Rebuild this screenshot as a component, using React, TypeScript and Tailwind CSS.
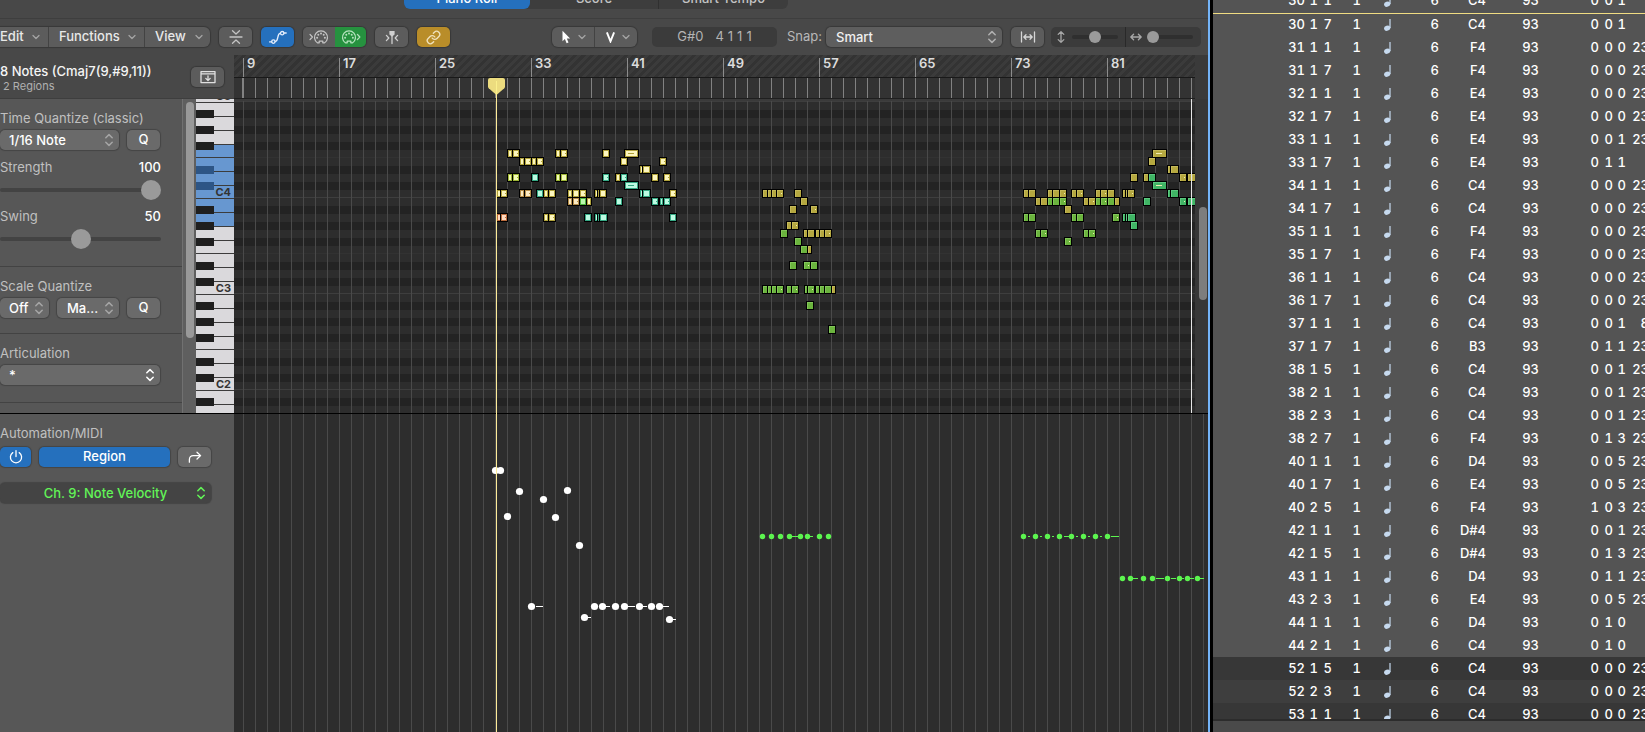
import { useState } from "react";
import type { ReactNode } from "react";
import { ChevronDown, Link } from "lucide-react";

type Tone = "y" | "g" | "t" | "n" | "o" | "l" | "O" | "G" | "T";

const TONES: Record<Tone, [string, string]> = {
  y: ["#fdf7c0", "#b0a23c"],
  l: ["#f4fbb8", "#9db436"],
  n: ["#fcebc4", "#b58d48"],
  o: ["#fdd9c0", "#bb6b3c"],
  g: ["#bdf9ae", "#4fb53c"],
  t: ["#bdfbe2", "#36a884"],
  O: ["#b5a840", "#c5b95a"],
  G: ["#6bb43e", "#82c659"],
  T: ["#40b565", "#5cc880"],
};

/* Each row: semitones from C4, then notes as [x, width, tone]. */
const NOTES: [number, [number, number, Tone][]][] = [
  [5, [[273, 6, "y"], [278, 8, "y"], [321, 6, "y"], [326, 8, "y"], [368, 8, "y"], [390, 15, "y"], [918, 15, "O"]]],
  [4, [[285, 6, "y"], [290, 8, "y"], [297, 6, "y"], [302, 8, "y"], [386, 8, "y"], [425, 8, "y"], [914, 8, "O"]]],
  [3, [[405, 4, "y"], [408, 9, "y"], [933, 4, "O"], [936, 9, "O"]]],
  [2, [[273, 6, "l"], [278, 8, "l"], [297, 8, "t"], [321, 6, "l"], [326, 8, "l"], [368, 8, "t"], [381, 6, "y"], [386, 8, "t"], [417, 8, "y"], [429, 8, "y"], [896, 8, "O"], [909, 6, "O"], [914, 8, "T"], [945, 8, "O"], [953, 5, "O"], [957, 6, "O"]]],
  [1, [[390, 15, "t"], [918, 15, "T"]]],
  [0, [[262, 6, "y"], [266, 8, "y"], [285, 6, "n"], [290, 8, "n"], [302, 8, "t"], [309, 6, "y"], [314, 8, "y"], [333, 6, "y"], [338, 8, "y"], [345, 8, "y"], [360, 4, "y"], [363, 3, "y"], [365, 8, "y"], [405, 4, "t"], [408, 9, "t"], [435, 8, "y"], [528, 6, "O"], [533, 5, "O"], [537, 6, "O"], [542, 8, "O"], [560, 8, "O"], [789, 6, "O"], [794, 8, "O"], [813, 6, "O"], [818, 8, "O"], [825, 8, "O"], [837, 6, "O"], [842, 8, "O"], [861, 6, "O"], [866, 8, "O"], [873, 8, "O"], [888, 4, "O"], [891, 3, "O"], [893, 8, "O"], [933, 4, "T"], [936, 9, "T"]]],
  [-1, [[333, 6, "n"], [338, 8, "n"], [345, 8, "g"], [352, 6, "y"], [381, 8, "t"], [417, 8, "t"], [425, 5, "t"], [429, 8, "t"], [566, 8, "O"], [801, 6, "O"], [806, 8, "O"], [813, 6, "G"], [818, 8, "G"], [825, 8, "G"], [849, 6, "O"], [854, 8, "O"], [861, 6, "G"], [866, 8, "G"], [873, 8, "G"], [880, 6, "O"], [909, 8, "T"], [945, 8, "T"], [953, 5, "T"], [957, 6, "T"]]],
  [-2, [[555, 8, "O"], [576, 8, "O"], [830, 8, "O"]]],
  [-3, [[262, 6, "o"], [266, 8, "o"], [309, 6, "y"], [314, 8, "y"], [350, 8, "t"], [360, 4, "t"], [363, 3, "t"], [365, 9, "t"], [435, 8, "t"], [789, 6, "G"], [794, 8, "G"], [837, 6, "G"], [842, 8, "G"], [878, 8, "G"], [888, 4, "T"], [891, 3, "T"], [893, 9, "T"]]],
  [-4, [[552, 6, "O"], [557, 8, "O"], [896, 8, "T"]]],
  [-5, [[546, 8, "G"], [569, 5, "O"], [573, 8, "O"], [581, 5, "O"], [585, 6, "O"], [590, 8, "O"], [801, 6, "G"], [806, 8, "G"], [849, 6, "G"], [854, 8, "G"]]],
  [-6, [[560, 8, "G"], [830, 8, "G"]]],
  [-7, [[566, 8, "G"], [573, 5, "O"]]],
  [-9, [[555, 8, "G"], [569, 8, "G"], [576, 8, "G"]]],
  [-12, [[528, 6, "G"], [533, 5, "G"], [537, 6, "G"], [542, 8, "G"], [552, 6, "G"], [557, 8, "G"], [570, 4, "G"], [573, 8, "G"], [581, 5, "G"], [585, 6, "G"], [590, 8, "G"], [597, 5, "O"]]],
  [-14, [[572, 8, "G"]]],
  [-17, [[594, 8, "G"]]],
];

/* Velocity points: [x, y] of the dot, with an optional tail [from, to]. */
const SELECTED_VELOCITIES: [number, number, number?, number?][] = [
  [261, 56], [266, 56], [273, 102], [285, 77], [309, 85], [321, 103], [333, 76], [345, 131],
  [297, 192, 302, 309], [350, 203, 354, 357], [360, 192], [368, 192, 372, 376], [381, 192],
  [390, 192, 394, 401], [405, 192, 409, 413], [417, 192], [425, 192, 429, 435], [435, 205, 439, 442],
];
const VELOCITIES: [number, number, number?, number?][] = [
  [528, 122], [537, 122], [546, 122], [555, 122, 558, 564], [566, 122], [573, 122, 576, 579], [585, 122], [594, 122],
  [789, 122, 794, 796], [801, 122, 806, 808], [813, 122, 818, 820], [825, 122, 830, 835], [837, 122, 842, 844],
  [849, 122, 854, 856], [861, 122, 866, 868], [873, 122, 877, 885],
  [888, 164], [896, 164, 899, 904], [909, 164], [918, 164, 922, 930], [933, 164, 937, 942], [945, 164, 948, 950], [953, 164, 956, 960], [963, 164, 966, 970],
];

const EVENTS = `30 1 1 C4 0 0 1
30 1 7 C4 0 0 1
31 1 1 F4 0 0 0 23
31 1 7 F4 0 0 0 23
32 1 1 E4 0 0 0 23
32 1 7 E4 0 0 0 23
33 1 1 E4 0 0 1 23
33 1 7 E4 0 1 1
34 1 1 C4 0 0 0 23
34 1 7 C4 0 0 0 23
35 1 1 F4 0 0 0 23
35 1 7 F4 0 0 0 23
36 1 1 C4 0 0 0 23
36 1 7 C4 0 0 0 23
37 1 1 C4 0 0 1 8
37 1 7 B3 0 1 1 23
38 1 5 C4 0 0 1 23
38 2 1 C4 0 0 1 23
38 2 3 C4 0 0 1 23
38 2 7 F4 0 1 3 23
40 1 1 D4 0 0 5 23
40 1 7 E4 0 0 5 23
40 2 5 F4 1 0 3 23
42 1 1 D#4 0 0 1 23
42 1 5 D#4 0 1 3 23
43 1 1 D4 0 1 1 23
43 2 3 E4 0 0 5 23
44 1 1 D4 0 1 0
44 2 1 C4 0 1 0
52 1 5 C4 0 0 0 23
52 2 3 C4 0 0 0 23
53 1 1 C4 0 0 0 23`.split("\n").map((line) => line.split(" "));

const BTN = "flex h-5 shrink-0 items-center justify-center rounded-[5px] shadow-[0_0_1px_1px_rgba(0,0,0,0.22)]";

function Stepper({ className }: { className: string }) {
  return (
    <svg viewBox="0 0 10 14" className={`pointer-events-none absolute h-[14px] w-[10px] ${className}`} fill="none" stroke="currentColor" strokeWidth="1.5" strokeLinecap="round" strokeLinejoin="round" aria-hidden="true">
      <path d="M1.8 4.8 5 1.6l3.2 3.2M1.8 9.2 5 12.4l3.2-3.2" />
    </svg>
  );
}

function Picker({ label, value, className, box, arrow }: { label: string; value: string; className: string; box: string; arrow: string }) {
  return (
    <div className={`relative flex h-5 items-center ${className}`}>
      <select aria-label={label} defaultValue={value} className={`h-full w-full appearance-none rounded-[5px] font-medium leading-5 shadow-[0_0_1px_1px_rgba(0,0,0,0.22)] outline-none ${box}`}>
        <option>{value}</option>
      </select>
      <Stepper className={arrow} />
    </div>
  );
}

function Slider({ label, initial, className }: { label: string; initial: number; className: string }) {
  const [value, setValue] = useState(initial);
  return (
    <input
      type="range"
      aria-label={label}
      min={0}
      max={100}
      value={value}
      onChange={(e) => setValue(Number(e.target.value))}
      className={`block appearance-none bg-transparent outline-none [&::-webkit-slider-runnable-track]:h-1 [&::-webkit-slider-runnable-track]:rounded-full [&::-webkit-slider-thumb]:appearance-none [&::-webkit-slider-thumb]:rounded-full [&::-webkit-slider-thumb]:bg-[#9a9a9a] ${className}`}
    />
  );
}

const PANEL_SLIDER = "h-5 w-full [&::-webkit-slider-runnable-track]:bg-[#434343] [&::-webkit-slider-thumb]:-mt-2 [&::-webkit-slider-thumb]:size-5";
const ZOOM_SLIDER = "h-3 w-[46px] [&::-webkit-slider-runnable-track]:bg-[#2f2f2f] [&::-webkit-slider-thumb]:-mt-1 [&::-webkit-slider-thumb]:size-3";

function Glyph({ children, w = 20, h = 16 }: { children: ReactNode; w?: number; h?: number }) {
  return (
    <svg width={w} height={h} viewBox={`0 0 ${w} ${h}`} fill="none" stroke="currentColor" strokeWidth="1.3" strokeLinecap="round" strokeLinejoin="round" aria-hidden="true">
      {children}
    </svg>
  );
}

function DinPlug({ x }: { x: number }) {
  return (
    <g transform={`translate(${x} 0)`}>
      <path d="M-3.6 13.8A6.5 6.5 0 1 1 3.6 13.8H1.8V12.2H-1.8V13.8Z" />
      <g fill="currentColor" stroke="none">
        <circle cx="-3.9" cy="8.8" r="1" />
        <circle cx="-2.7" cy="5.8" r="1" />
        <circle cx="0" cy="4.5" r="1" />
        <circle cx="2.7" cy="5.8" r="1" />
        <circle cx="3.9" cy="8.8" r="1" />
      </g>
    </g>
  );
}

function MenuButton({ children, className }: { children: ReactNode; className: string }) {
  return (
    <button type="button" className={`flex h-5 items-center justify-between ${className}`}>
      {children}
      <ChevronDown className="size-3 text-[#a5a5a5]" strokeWidth={2.5} />
    </button>
  );
}

function Toolbar() {
  return (
    <div className="flex h-9 shrink-0 items-center text-[#e8e8e8]">
      <div className="flex rounded-r-[6px] bg-[#5c5c5c] text-[13px] font-medium shadow-[0_0_1px_1px_rgba(0,0,0,0.22)]">
        <MenuButton className="w-12 pr-[6px]">Edit</MenuButton>
        <MenuButton className="w-24 border-l border-[#434343] pl-[10px] pr-[6px]">Functions</MenuButton>
        <MenuButton className="w-[66px] border-l border-[#434343] pl-[10px] pr-[5px]">View</MenuButton>
      </div>
      <button type="button" aria-label="Collapse" className={`${BTN} ml-[9px] w-[33px] bg-[#5c5c5c] text-[#c4c4c4]`}>
        <Glyph><path d="M6.5 1.8 10 5l3.5-3.2M6.5 14.2 10 11l3.5 3.2M4 8h12" /></Glyph>
      </button>
      <button type="button" aria-label="Show automation" className={`${BTN} ml-[9px] w-[33px] bg-[#2570bd] text-[#e6eefc]`}>
        <Glyph>
          <circle cx="5.4" cy="12.6" r="1.7" />
          <circle cx="14.2" cy="4.2" r="1.7" />
          <path d="M1.6 12.9h2M7.2 12.600C11 12.200 8.600 4.700 12.400 4.200M16 4H18.200" />
        </Glyph>
      </button>
      <div className="ml-[9px] flex rounded-[5px] shadow-[0_0_1px_1px_rgba(0,0,0,0.22)]">
        <button type="button" aria-label="MIDI in" className="flex h-5 w-8 items-center justify-center rounded-l-[5px] bg-[#5c5c5c] text-[#c4c4c4]">
          <Glyph><path d="M1 5.4 3.4 8 1 10.6" /><DinPlug x={12} /></Glyph>
        </button>
        <button type="button" aria-label="MIDI out" className="flex h-5 w-[31px] items-center justify-center rounded-r-[5px] bg-[#26923f] text-[#b5e3be]">
          <Glyph><path d="M16.4 5.4 18.8 8l-2.4 2.6" /><DinPlug x={8} /></Glyph>
        </button>
      </div>
      <button type="button" aria-label="Catch playhead" className={`${BTN} ml-[9px] w-[33px] bg-[#5c5c5c] text-[#d0d0d0]`}>
        <Glyph>
          <path d="M7.4 2h5.2v3.6L10 7.800 7.400 5.600Z" fill="currentColor" stroke="none" />
          <path d="M10 6v8.5M4.4 6.4 6.8 9l-2.4 2.6M15.6 6.4 13.2 9l2.4 2.6" />
        </Glyph>
      </button>
      <button type="button" aria-label="Link" className={`${BTN} ml-[9px] w-[33px] bg-[#b98d29] text-[#f0e2bd]`}>
        <Link className="size-[15px]" strokeWidth={2.2} />
      </button>

      <div className="ml-auto flex rounded-[6px] bg-[#5c5c5c] text-[13px] font-medium shadow-[0_0_1px_1px_rgba(0,0,0,0.22)]">
        <MenuButton className="w-[42px] pl-2 pr-[6px]">
          <svg width="12" height="14" viewBox="0 0 12 14" fill="#fff" aria-label="Pointer tool"><path d="M2.5.8v10.4l2.4-2.1 1.7 4.2 1.900-.8-1.700-4.100h3.300z" /></svg>
        </MenuButton>
        <MenuButton className="w-[43px] border-l border-[#434343] pl-[11px] pr-[5px]">
          <svg width="9" height="12" viewBox="0 0 9 12" fill="none" stroke="#fff" strokeWidth="1.9" aria-label="Velocity tool"><path d="M.9 1.400 4.500 10.400 8.100 1.400" /></svg>
        </MenuButton>
      </div>
      <output className="ml-[15px] flex h-5 w-[125px] shrink-0 items-center justify-center gap-3 rounded-[5px] bg-[#3b3b3b] text-[13px] text-[#b4b4b4]">
        <span>G#0</span>
        <span className="flex gap-1"><span>4</span><span>1</span><span>1</span><span>1</span></span>
      </output>
      <label className="ml-[10px] text-[13px] text-[#b8b8b8]" htmlFor="snap">Snap:</label>
      <div className="relative ml-[4px] flex h-5 w-[176px] shrink-0 items-center">
        <select id="snap" defaultValue="Smart" className="h-full w-full appearance-none rounded-[5px] bg-[#5e5e5e] pl-[10px] text-[13px] font-medium leading-5 text-[#f0f0f0] shadow-[0_0_1px_1px_rgba(0,0,0,0.22)] outline-none">
          <option>Smart</option>
        </select>
        <Stepper className="right-[5px] text-[#b0b0b0]" />
      </div>
      <button type="button" aria-label="Zoom to fit" className={`${BTN} ml-[9px] w-[33px] bg-[#5c5c5c] text-[#d6d6d6]`}>
        <Glyph><path d="M3.5 3v10M16.5 3v10M6 8h8M8 5.8 5.8 8 8 10.2M12 5.8 14.2 8 12 10.2" /></Glyph>
      </button>
      <div className="ml-[7px] mr-[7px] flex h-5 shrink-0 items-center rounded-[5px] bg-[#3b3b3b] text-[#a8a8a8]">
        <div className="flex h-full w-[75px] items-center gap-1 border-r border-[#292929] pl-[3px]">
          <Glyph w={14}><path d="M7 3v10M4.2 5.4 7 2.6l2.8 2.8M4.2 10.6 7 13.4l2.8-2.8" /></Glyph>
          <Slider label="Vertical zoom" initial={49} className={ZOOM_SLIDER} />
        </div>
        <div className="flex h-full w-[75px] items-center gap-1 pl-[3px]">
          <Glyph w={14}><path d="M3 8h8M4.6 5.2 1.8 8l2.8 2.8M9.4 5.2 12.2 8l-2.8 2.8" /></Glyph>
          <Slider label="Horizontal zoom" initial={0} className={ZOOM_SLIDER} />
        </div>
      </div>
    </div>
  );
}

const LABEL = "h-5 text-[13px] leading-5 text-[#c0c0c0]";

function Inspector() {
  const q = `${BTN} ml-2 w-[33px] bg-[#6a6a6a] text-[13px] font-medium text-white`;
  const box = "bg-[#6a6a6a] text-[13px] text-white";
  return (
    <div className="w-[182px] shrink-0 bg-[#575757]">
      <section className="h-[168px] border-b border-[#434343] pr-[21px] pt-[9px]">
        <h3 className={LABEL}>Time Quantize (classic)</h3>
        <div className="mt-[2px] flex">
          <Picker label="Time Quantize" value="1/16 Note" className="w-[119px]" box={`${box} pl-[9px]`} arrow="right-[5px] text-[#a5a5a5]" />
          <button type="button" className={q}>Q</button>
        </div>
        <div className={`${LABEL} mt-[7px] flex justify-between`}><span>Strength</span><span className="font-medium text-white">100</span></div>
        <Slider label="Strength" initial={100} className={`mt-[3px] ${PANEL_SLIDER}`} />
        <div className={`${LABEL} mt-[6px] flex justify-between`}><span>Swing</span><span className="font-medium text-white">50</span></div>
        <Slider label="Swing" initial={50} className={`mt-[3px] ${PANEL_SLIDER}`} />
      </section>
      <section className="h-[67px] border-b border-[#434343] pr-[21px] pt-[9px]">
        <h3 className={LABEL}>Scale Quantize</h3>
        <div className="mt-[2px] flex">
          <Picker label="Scale Quantize" value="Off" className="w-[49px]" box={`${box} pl-[9px]`} arrow="right-[5px] text-[#a5a5a5]" />
          <Picker label="Scale" value="Ma..." className="ml-2 w-[62px]" box={`${box} pl-[10px]`} arrow="right-[5px] text-[#a5a5a5]" />
          <button type="button" className={q}>Q</button>
        </div>
      </section>
      <section className="h-[69px] border-b border-[#434343] pr-[21px] pt-[9px]">
        <h3 className={LABEL}>Articulation</h3>
        <Picker label="Articulation" value="*" className="mt-[2px] w-[160px]" box={`${box} pl-[9px]`} arrow="right-[5px] text-white" />
      </section>
    </div>
  );
}

/* Bottom edges of the white keys inside one octave, from B down to C. */
const WHITE_EDGES = [14, 28, 42, 55, 69, 83, 96];
const BLACK_TOPS = [8, 24, 40, 64, 80];
const OCTAVES = [-93, 3, 99, 195, 291];

function Keyboard() {
  return (
    <svg width="38" height="314" className="block shrink-0" aria-label="Keyboard">
      <rect width="38" height="314" fill="#dad9dc" />
      <rect y="46" width="38" height="81" fill="#6797d0" />
      {OCTAVES.map((top) => (
        <g key={top}>
          {WHITE_EDGES.map((y) => <rect key={y} y={top + y} width="38" height="1" fill="#3c3c3c" />)}
          {BLACK_TOPS.map((y) => (
            <rect key={y} y={top + y} width="18" height="8" fill={top === 3 && y >= 64 ? "#2d5585" : "#1f1f1f"} />
          ))}
        </g>
      ))}
      <g fill="#333" fontSize="11" fontWeight="700" textAnchor="end">
        <text x="35" y="1">C5</text>
        <text x="35" y="97">C4</text>
        <text x="35" y="193">C3</text>
        <text x="35" y="289">C2</text>
      </g>
    </svg>
  );
}

function Roll() {
  return (
    <svg width="100%" height="314" className="block" aria-label="Piano roll">
      <defs>
        <pattern id="rows" y="3" width="12" height="96" patternUnits="userSpaceOnUse">
          <rect width="12" height="96" fill="#2d2d2d" />
          {BLACK_TOPS.map((y) => <rect key={y} y={y} width="12" height="8" fill="#232323" />)}
          <rect y="95" width="12" height="1" fill="#3e3e3e" />
          <rect y="55" width="12" height="1" fill="#323232" />
        </pattern>
        <pattern id="bars" x="9" width="12" height="96" patternUnits="userSpaceOnUse">
          <rect width="1" height="96" fill="#4a4a4a" />
        </pattern>
      </defs>
      <rect width="100%" height="314" fill="url(#rows)" />
      <rect width="100%" height="314" fill="url(#bars)" />
      <rect width="100%" height="2" fill="#3a3a3a" />
      {NOTES.map(([pitch, notes]) =>
        notes.map(([x, w, tone], i) => {
          const y = 90 - pitch * 8;
          const [fill, edge] = TONES[tone];
          const bright = tone === tone.toLowerCase();
          return (
            <g key={`${pitch}:${i}`}>
              <rect x={x} y={y} width={w} height="9" fill="#000" />
              <rect x={x + 1} y={y + 1} width={Math.max(w - 2, 1)} height="7" fill={edge} />
              {w > 3 && <rect x={x + 2} y={y + 2} width={Math.max(w - (bright ? 4 : 3), 1)} height={bright ? 5 : 6} fill={fill} />}
              {w === 15 && <rect x={x + 4} y={y + 4} width="6" height="1" fill={bright ? edge : "#f2ecb4"} />}
              {w === 8 && i % 2 === 1 && <rect x={x + 5} y={y + 4} width="1" height="1" fill={bright ? edge : "#f2ecb4"} />}
            </g>
          );
        }),
      )}
      <rect x="957" width="1" height="314" fill="#e6e6e6" />
    </svg>
  );
}

function Points({ data, r, color }: { data: [number, number, number?, number?][]; r: number; color: string }) {
  return (
    <g fill={color}>
      {data.map(([x, y, from, to], i) => (
        <g key={i}>
          <circle cx={x + 0.5} cy={y + 0.5} r={r} />
          {from !== undefined && to !== undefined && <rect x={from} y={y} width={to - from} height="1" />}
        </g>
      ))}
    </g>
  );
}

function VelocityLane() {
  return (
    <div className="min-w-0 flex-1 overflow-hidden">
      <svg width="100%" height="100%" className="block" aria-label="Note velocity">
        <rect width="100%" height="100%" fill="#2d2d2d" />
        <rect width="100%" height="100%" fill="url(#bars)" />
        <Points data={SELECTED_VELOCITIES} r={3.6} color="#fff" />
        <Points data={VELOCITIES} r={2.7} color="#5cf44f" />
      </svg>
    </div>
  );
}

function Ruler() {
  return (
    <div className="h-11 min-w-0 flex-1 overflow-hidden border-b border-[#1f1f1f] bg-[#333]">
      <div className="flex h-[23px] border-b border-[#191919] bg-[repeating-linear-gradient(135deg,#333_0px,#333_3px,#3b3b3b_3px,#3b3b3b_6px)] pl-[9px] pt-[3px]">
        {[9, 17, 25, 33, 41, 49, 57, 65, 73, 81].map((bar) => (
          <span key={bar} className="h-full w-24 shrink-0 border-l border-[#8c8c8c] pl-[3px] text-[13px] font-semibold leading-[11px] text-[#dcdcdc]">{bar}</span>
        ))}
      </div>
      <div className="h-5 bg-[repeating-linear-gradient(90deg,#828282_0px,#828282_1px,transparent_1px,transparent_12px)] bg-[position:9px_0] bg-repeat-x" />
    </div>
  );
}

function EventList() {
  return (
    <aside className="flex w-[432px] shrink-0 flex-col overflow-hidden bg-[#4a4a4a]">
      <div className="min-h-0 flex-1 overflow-hidden border-b-2 border-[#2c2c2c] bg-[#545454]">
        <table className="-mt-[10px] w-[436px] table-fixed border-collapse text-[13px] font-medium tabular-nums leading-5 text-white">
          <colgroup>
            <col className="w-[92px]" /><col className="w-[13px]" /><col className="w-[14px]" /><col className="w-[29px]" />
            <col className="w-[30px]" /><col className="w-[48px]" /><col className="w-[47px]" /><col className="w-[53px]" />
            <col className="w-[60px]" /><col className="w-[14px]" /><col className="w-[13px]" /><col className="w-[23px]" />
          </colgroup>
          <tbody>
            {EVENTS.map(([bar, beat, div, pitch, l1, l2, l3, l4], i) => (
              <tr key={i} className={`h-[23px] text-right *:p-0 *:pb-[2px] ${i === 0 ? "border-b border-[#f0dc82]" : ""} ${i >= 29 ? (i % 2 ? "bg-[#373737]" : "bg-[#3e3e3e]") : ""}`}>
                <td>{bar}</td>
                <td>{beat}</td>
                <td>{div}</td>
                <td>1</td>
                <td>
                  <svg width="7" height="14" viewBox="0 0 7 14" className="ml-auto block" fill="#c6d9ee" aria-label="Note">
                    <ellipse cx="3.2" cy="11.2" rx="3.2" ry="2.5" transform="rotate(-20 3.2 11.2)" />
                    <rect x="5.400" y="2" width="1.200" height="9" />
                  </svg>
                </td>
                <td>6</td>
                <td>{pitch}</td>
                <td>93</td>
                <td>{l1}</td>
                <td>{l2}</td>
                <td>{l3}</td>
                <td>{l4}</td>
              </tr>
            ))}
          </tbody>
        </table>
      </div>
      <div className="h-[11px] shrink-0" />
    </aside>
  );
}

export default function App() {
  return (
    <div className="flex h-screen w-full overflow-hidden bg-[#484848] font-['Inter',sans-serif]">
      <main className="flex min-w-0 flex-1 flex-col">
        <div className="flex h-[19px] shrink-0 justify-center border-b border-[#3e3e3e] pr-4">
          <div role="tablist" className="-mt-[11px] flex h-5 w-[384px] rounded-[6px] bg-[#3d3d3d] text-[13px] font-medium text-[#c4c4c4]">
            <button type="button" role="tab" aria-selected="true" className="w-[126px] rounded-[6px] bg-[#2570bd] text-white">Piano Roll</button>
            <button type="button" role="tab" aria-selected="false" className="w-[129px] border-r border-[#303030]">Score</button>
            <button type="button" role="tab" aria-selected="false" className="flex-1">Smart Tempo</button>
          </div>
        </div>
        <Toolbar />
        <div className="relative flex min-h-0 flex-1 flex-col">
          <div className="flex h-11 shrink-0">
            <header className="flex w-[234px] shrink-0 items-center justify-between border-b border-[#3e3e3e] pr-[10px]">
              <div className="pt-[2px]">
                <h2 className="whitespace-nowrap text-[13px] font-medium leading-4 text-[#f4f4f4]">8 Notes (Cmaj7(9,#9,11))</h2>
                <p className="pl-[3px] text-[11px] leading-[14px] text-[#b0b0b0]">2 Regions</p>
              </div>
              <button type="button" aria-label="Show region inspector" className={`${BTN} w-[33px] bg-[#5c5c5c] text-[#e0e0e0]`}>
                <Glyph w={18} h={14}><path d="M2 1.6h14v11H2ZM2 3.8h14M9 5.8v4.6M6.8 8.4 9 10.6l2.2-2.2" /></Glyph>
              </button>
            </header>
            <Ruler />
            <div className="w-[13px] shrink-0 bg-[#3a3a3a]" />
          </div>
          <div className="flex h-[314px] shrink-0">
            <Inspector />
            <div className="w-[14px] shrink-0 border-l border-[#717171] bg-[#5f5f5f] pl-[3px] pt-[3px]">
              <div className="h-[236px] w-2 rounded-full bg-[#999]" />
            </div>
            <Keyboard />
            <div className="min-w-0 flex-1 overflow-hidden"><Roll /></div>
            <div className="w-[13px] shrink-0 bg-[#373737] pl-1 pt-[108px]">
              <div className="h-[93px] w-2 rounded-full bg-[#7d7d7d]" />
            </div>
          </div>
          <div className="flex min-h-0 flex-1 border-t border-black">
            <div className="w-[234px] shrink-0 bg-[#575757] pt-[9px]">
              <h3 className={LABEL}>Automation/MIDI</h3>
              <div className="mt-[4px] flex gap-2">
                <button type="button" aria-label="Automation on" className={`${BTN} w-[31px] bg-[#2570bd] text-white`}>
                  <Glyph w={16}><path d="M8 1.600v6M4.800 3.600a5.600 5.600 0 1 0 6.400 0" /></Glyph>
                </button>
                <button type="button" className={`${BTN} w-[131px] bg-[#2570bd] text-[13px] font-medium text-white`}>Region</button>
                <button type="button" aria-label="Convert automation" className={`${BTN} w-[33px] bg-[#6a6a6a] text-white`}>
                  <Glyph w={16}><path d="M2.4 13.2V10.6C2.4 8 3.8 6.6 6.4 6.6H13.4M10 3.2l3.6 3.4L10 10" /></Glyph>
                </button>
              </div>
              <Picker label="Automation parameter" value="Ch. 9: Note Velocity" className="mt-4 w-[211px]" box="bg-[#444] text-[13px] text-[#62f457] text-center [text-align-last:center]" arrow="right-[5px] text-[#62f457]" />
            </div>
            <VelocityLane />
          </div>
          <div className="pointer-events-none absolute bottom-0 left-[488px] top-[23px] flex w-[17px] flex-col items-center" aria-hidden="true">
            <svg width="17" height="17" viewBox="0 0 17 17" className="shrink-0">
              <path d="M2 0h13q2 0 2 2v6.500q0 1-.7 1.700L8.500 17 .7 10.200Q0 9.500 0 8.500V2Q0 0 2 0Z" fill="#ecdc7f" />
              <rect x="8" y="3" width="1" height="14" fill="#fbf08c" />
            </svg>
            <div className="w-px flex-1 bg-[#fdeb98]" />
          </div>
        </div>
      </main>
      <div className="w-[5px] shrink-0 border-l-2 border-[#74b4f8] bg-black" />
      <EventList />
    </div>
  );
}
